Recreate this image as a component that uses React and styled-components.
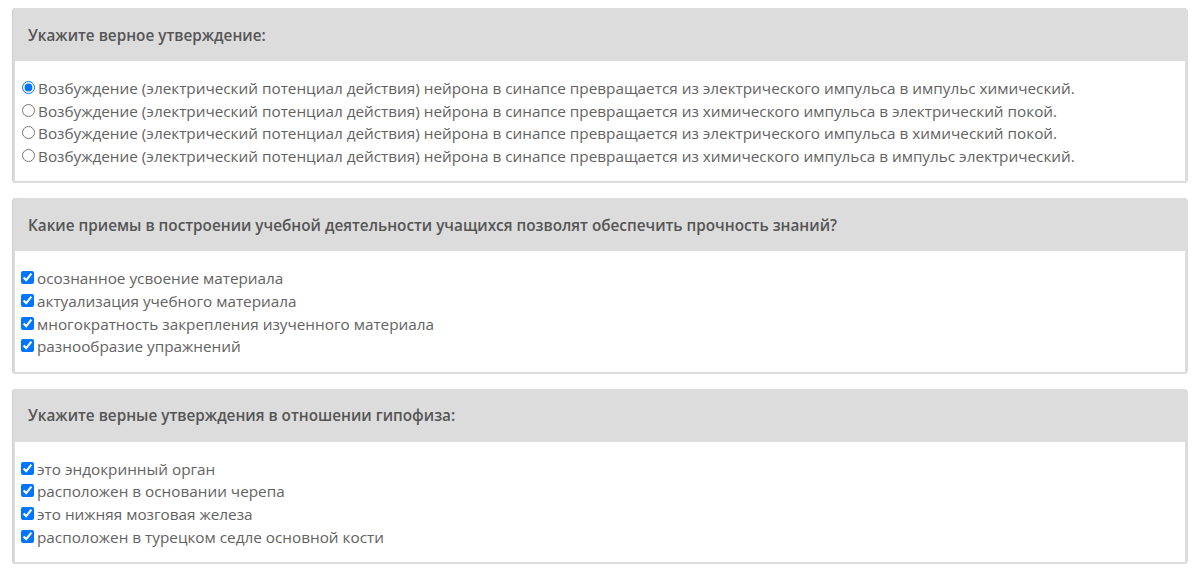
import React from 'react';
import styled, { createGlobalStyle } from 'styled-components';

const GlobalStyle = createGlobalStyle`
    body {
        margin: 0;
        background: #fff;
        font-family: "Open Sans", "Liberation Sans", sans-serif;
    }
`;

const questions = [
    {
        id: 'q1',
        type: 'radio',
        title: 'Укажите верное утверждение:',
        options: [
            { text: 'Возбуждение (электрический потенциал действия) нейрона в синапсе превращается из электрического импульса в импульс химический.', checked: true },
            { text: 'Возбуждение (электрический потенциал действия) нейрона в синапсе превращается из химического импульса в электрический покой.' },
            { text: 'Возбуждение (электрический потенциал действия) нейрона в синапсе превращается из электрического импульса в химический покой.' },
            { text: 'Возбуждение (электрический потенциал действия) нейрона в синапсе превращается из химического импульса в импульс электрический.' },
        ],
    },
    {
        id: 'q2',
        type: 'checkbox',
        title: 'Какие приемы в построении учебной деятельности учащихся позволят обеспечить прочность знаний?',
        options: [
            { text: 'осознанное усвоение материала', checked: true },
            { text: 'актуализация учебного материала', checked: true },
            { text: 'многократность закрепления изученного материала', checked: true },
            { text: 'разнообразие упражнений', checked: true },
        ],
    },
    {
        id: 'q3',
        type: 'checkbox',
        title: 'Укажите верные утверждения в отношении гипофиза:',
        options: [
            { text: 'это эндокринный орган', checked: true },
            { text: 'расположен в основании черепа', checked: true },
            { text: 'это нижняя мозговая железа', checked: true },
            { text: 'расположен в турецком седле основной кости', checked: true },
        ],
    },
];

export default function App() {
    return (
        <Page>
            <GlobalStyle />
            {questions.map(q => (
                <Card key={q.id}>
                    <CardHeader>{q.title}</CardHeader>
                    <CardBody>
                        {q.options.map((o, i) => (
                            <Option key={i}>
                                <input
                                    type={q.type}
                                    name={q.id}
                                    defaultChecked={!!o.checked}
                                />
                                {o.text}
                            </Option>
                        ))}
                    </CardBody>
                </Card>
            ))}
        </Page>
    );
}

const Page = styled.div`
    display: flex;
    flex-direction: column;
    gap: 15px;
    padding: 8px 12px;
`;

const Card = styled.section`
    background: #dcdcdc;
    border-radius: 4px;
    padding: 0 3px 2px 3px;
    box-shadow: inset 1px 0 0 #d0d0d0;
`;

const CardHeader = styled.h3`
    margin: 0;
    height: 53px;
    display: flex;
    align-items: center;
    padding: 0 13px;
    font-size: 15.3px;
    font-weight: 600;
    color: #555;
`;

const CardBody = styled.div`
    background: #fff;
    padding: 16px 2px 14px;
    display: flex;
    flex-direction: column;
`;

const Option = styled.label`
    display: block;
    font-size: 15.3px;
    line-height: 22.6px;
    color: #626262;

    input {
        vertical-align: baseline;
        margin-right: 3px;
    }
`;
